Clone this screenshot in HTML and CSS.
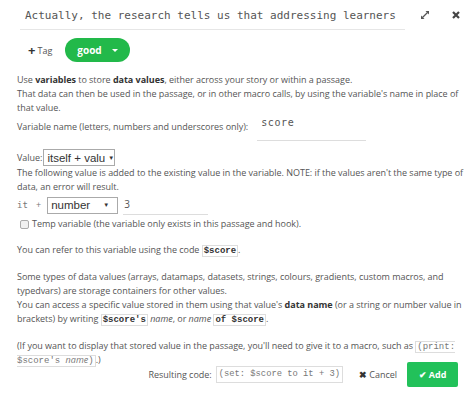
FILE: index.html
```html
<!DOCTYPE html>
<html>

<head>
   <meta charset="UTF-8">
   <link rel="stylesheet" href="styles.css">
</head>

<body>
   <div class="header">
      <div class="title">Actually, the research tells us that addressing learners</div>
      <span class="icon expand">
         <svg width="10" height="10" viewBox="0 0 10 10">
            <path d="M2.5 7.5 L7.5 2.5" stroke="#555" stroke-width="1.3" />
            <path d="M5.5 1 L9 1 L9 4.5 Z" fill="#555" />
            <path d="M1 5.5 L1 9 L4.5 9 Z" fill="#555" />
         </svg>
      </span>
      <span class="icon close">
         <svg width="8" height="8" viewBox="0 0 8 8">
            <path d="M1 1 L7 7 M7 1 L1 7" stroke="#444" stroke-width="2.2" />
         </svg>
      </span>
   </div>

   <div class="tags">
      <span class="add-tag"><b>+</b>Tag</span>
      <span class="pill">good <span class="caret"></span></span>
   </div>

   <div class="content">
      <p class="tight">
         Use <b>variables</b> to store <b>data values</b>, either across your story or within a passage.<br>
         That data can then be used in the passage, or in other macro calls, by using the variable's name in place of<br>
         that value.
      </p>

      <div class="row name-row">
         <span>Variable name (letters, numbers and underscores only):</span>
         <span class="line-input name-input">score</span>
      </div>

      <div class="row value-row">
         <span>Value:</span>
         <span class="select value-select"><span class="sel-text">itself + valu</span><span class="arrow">&#9660;</span></span>
      </div>
      <p class="tight">
         The following value is added to the existing value in the variable. NOTE: if the values aren't the same type of<br>
         data, an error will result.
      </p>

      <div class="row it-row">
         <span class="it">it</span>
         <span class="plus">+</span>
         <span class="select number-select"><span class="sel-text">number</span><span class="arrow">&#9660;</span></span>
         <span class="line-input num-input">3</span>
      </div>

      <label class="row temp-row">
         <span class="checkbox"></span>
         Temp variable (the variable only exists in this passage and hook).
      </label>

      <p>You can refer to this variable using the code <code class="dark">$score</code>.</p>

      <p class="containers">
         Some types of data values (arrays, datamaps, datasets, strings, colours, gradients, custom macros, and<br>
         typedvars) are storage containers for other values.<br>
         You can access a specific value stored in them using that value's <b>data name</b> (or a string or number value in<br>
         brackets) by writing <code class="dark">$score's</code> <i>name</i>, or <i>name</i> <code class="dark">of $score</code>.
      </p>

      <p>(If you want to display that stored value in the passage, you'll need to give it to a macro, such as <code>(print:<br>$score's <i>name</i>)</code>.)</p>

      <div class="footer">
         <span>Resulting code:</span>
         <code class="result">(set: $score to it + 3)</code>
         <span class="cancel"><b>&#10006;</b> Cancel</span>
         <span class="add-btn">&#10004; Add</span>
      </div>
   </div>
</body>

</html>
```

FILE: styles.css
```css
body {
   margin: 0;
   font-family: "Open Sans", sans-serif;
   font-size: 9px;
   color: #555;
   background: #fff;
}

.header {
   display: flex;
   align-items: center;
   padding: 4px 0 0 20px;
}

.title {
   width: 375px;
   padding: 5px 5px 7px 5px;
   border-bottom: 1px solid #e6e6e6;
   font-family: "DejaVu Sans Mono", monospace;
   font-size: 11px;
   color: #555;
   white-space: nowrap;
   overflow: hidden;
}

.icon {
   display: flex;
}

.expand {
   margin-left: 15px;
   margin-top: -4px;
}

.close {
   margin-left: 22px;
   margin-top: -4px;
}

.tags {
   display: flex;
   align-items: center;
   padding: 8px 0 0 28px;
}

.add-tag {
   display: flex;
   align-items: center;
   font-size: 9px;
   color: #555;
}

.add-tag b {
   font-size: 13px;
   color: #333;
   margin-right: 2px;
}

.pill {
   margin-left: 13px;
   display: flex;
   align-items: center;
   height: 24px;
   padding: 0 12px;
   border-radius: 12px;
   background: #22b94a;
   color: #fff;
   font-weight: bold;
   font-size: 10px;
}

.caret {
   margin-left: 10px;
   border-left: 3px solid transparent;
   border-right: 3px solid transparent;
   border-top: 3px solid #fff;
}

.content {
   padding: 11px 4px 0 17px;
   line-height: 14px;
   letter-spacing: -0.03px;
}

p {
   margin: 0 0 12px 0;
}

p.tight {
   margin: 0;
}

p.containers {
   margin-top: 13px;
   margin-bottom: 13px;
}

b {
   color: #333;
}

.row {
   display: flex;
   align-items: center;
}

.name-row {
   margin-top: -2px;
}

.line-input {
   border-bottom: 1px solid #ddd;
   font-family: "DejaVu Sans Mono", monospace;
   color: #555;
}

.name-input {
   margin-left: 9px;
   width: 101px;
   padding: 3px 4px 10px 4px;
   font-size: 10px;
   letter-spacing: 0.6px;
}

.value-row {
   margin-top: 8px;
}

.select {
   box-sizing: border-box;
   display: flex;
   align-items: center;
   justify-content: space-between;
   height: 17px;
   padding: 0 3px 0 3px;
   border: 1px solid #aaa;
   font-family: "Liberation Sans", Arial, sans-serif;
   font-size: 11.5px;
   letter-spacing: 0;
   color: #333;
   background: #fff;
   white-space: nowrap;
   overflow: hidden;
}

.arrow {
   font-size: 6px;
   margin-left: 3px;
}

.value-select {
   margin-left: 1px;
   width: 72px;
}

.it-row {
   margin-top: 1px;
}

.it {
   font-family: "DejaVu Sans Mono", monospace;
   color: #777;
   width: 12px;
}

.plus {
   margin-left: 7px;
   color: #777;
}

.number-select {
   margin-left: 6px;
   width: 71px;
   padding-right: 8px;
}

.num-input {
   margin-left: 5px;
   width: 80px;
   padding: 2px 4px 3px 1px;
   font-family: "Open Sans", sans-serif;
   font-size: 10px;
}

.temp-row {
   margin: 2px 0 12px 3px;
}

.checkbox {
   box-sizing: border-box;
   width: 9px;
   height: 9px;
   border: 1px solid #aaa;
   border-radius: 2px;
   background: #f0f0f0;
   margin-right: 3px;
}

code {
   font-family: "Liberation Mono", "Courier New", monospace;
   font-size: 9px;
   line-height: 1;
   letter-spacing: 0;
   color: #777;
   border: 1px solid #ddd;
   padding: 0 1px;
}

code.dark {
   color: #333;
   font-weight: bold;
}

code i {
   font-family: "Open Sans", sans-serif;
}

.footer {
   display: flex;
   align-items: center;
   justify-content: flex-end;
   margin: -17px 12px 0 0;
}

.result {
   margin-left: 4px;
   padding: 3px 2px;
   font-size: 8.8px;
}

.cancel {
   margin-left: 16px;
}

.cancel b {
   color: #333;
}

.add-btn {
   margin-left: 10px;
   width: 51px;
   height: 25px;
   display: flex;
   align-items: center;
   justify-content: center;
   background: #22c15a;
   color: #fff;
   font-weight: bold;
   border-radius: 2px;
}
```
